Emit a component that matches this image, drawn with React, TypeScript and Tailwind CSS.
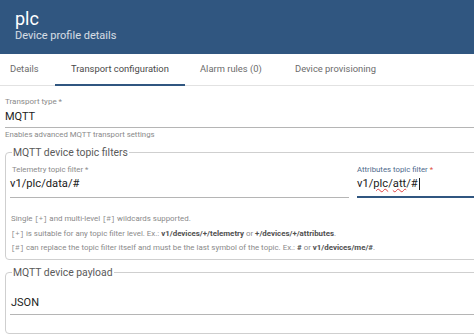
import React from 'react';

const Code: React.FC<{ children: React.ReactNode }> = ({ children }) => (
    <span className="font-['Liberation_Mono',monospace] text-[7.2px]">{children}</span>
);

const tabs = [
    { label: 'Details', box: 'w-[55px] pl-[10px]' },
    { label: 'Transport configuration', box: 'w-[130px] justify-center', active: true },
    { label: 'Alarm rules (0)', box: 'w-[95px] pl-[15px]' },
    { label: 'Device provisioning', box: 'w-[150px] pl-[15px]' },
];

export default function App() {
    return (
        <div className="w-[474px] h-[335px] overflow-hidden bg-white font-['Roboto','Noto_Sans',sans-serif]">
            <div className="h-[54px] bg-[#305680] px-[15px] pt-[9px]">
                <div className="text-[18px] leading-[20px] text-white">plc</div>
                <div className="mt-[1px] text-[11px] leading-[12px] text-white/80">Device profile details</div>
            </div>

            <div className="flex h-[32px] border-b border-[#e2e2e2]">
                {tabs.map((tab) => (
                    <div key={tab.label} className={`relative flex items-center text-[9.4px] ${tab.box} ${tab.active ? 'text-[#4a4a4a]' : 'text-[#6b6b6b]'}`}>
                        {tab.label}
                        {tab.active && <div className="absolute left-0 right-0 bottom-[-1px] h-[2px] bg-[#305680]" />}
                    </div>
                ))}
            </div>

            <div className="w-[520px] pl-[5px]">
                <div className="mt-[11px] border-b border-[#b5b5b5] pb-[3px]">
                    <div className="text-[8px] leading-[10px] text-[#8a8a8a]">Transport type *</div>
                    <div className="mt-[3px] text-[11px] leading-[14px] text-[#222]">MQTT</div>
                </div>
                <div className="mt-[2px] text-[7.8px] leading-[10px] text-[#8a8a8a]">Enables advanced MQTT transport settings</div>

                <fieldset className="mt-[6px] rounded-[4px] border border-[#cfcfcf] pl-[4px] pb-[3px]">
                    <legend className="ml-[2px] px-[1px] text-[10.4px] leading-[13px] text-[#5a5a5a]">MQTT device topic filters</legend>
                    <div className="mt-[6px] flex gap-[8px]">
                        <div className="w-[339px] border-b border-[#b5b5b5] pb-[5px]">
                            <div className="pl-[2px] text-[7.8px] leading-[10px] text-[#8a8a8a]">Telemetry topic filter *</div>
                            <div className="mt-[1px] text-[11.2px] leading-[16px] text-[#222]">v1/plc/data/#</div>
                        </div>
                        <div className="flex-1 border-b-2 border-[#305680] pb-[4px]">
                            <div className="text-[7.8px] leading-[10px] text-[#4f6a8c]">
                                Attributes topic filter <span className="text-[#e0533d]">*</span>
                            </div>
                            <div className="mt-[1px] flex items-center text-[11.2px] leading-[16px] text-[#222]">
                                v1/<span className="underline decoration-wavy decoration-[#e04040] decoration-1 underline-offset-[1px] [text-decoration-thickness:0.5px]">plc</span>/<span className="underline decoration-wavy decoration-[#e04040] underline-offset-[1px] [text-decoration-thickness:0.5px]">att</span>/#
                                <span className="ml-[1px] h-[12px] w-[1px] bg-[#222]" />
                            </div>
                        </div>
                    </div>
                    <div className="mt-[14px] pl-[1px] text-[7.9px] leading-[14.5px] text-[#8a8a8a]">
                        <div>
                            Single <Code>[+]</Code> and multi-level <Code>[#]</Code> wildcards supported.
                        </div>
                        <div>
                            <Code>[+]</Code> is suitable for any topic filter level. Ex.: <b className="text-[#505050]">v1/devices/+/telemetry</b> or <b className="text-[#505050]">+/devices/+/attributes</b>.
                        </div>
                        <div>
                            <Code>[#]</Code> can replace the topic filter itself and must be the last symbol of the topic. Ex.: <b className="text-[#505050]">#</b> or <b className="text-[#505050]">v1/devices/me/#</b>.
                        </div>
                    </div>
                </fieldset>

                <fieldset className="mt-[6px] rounded-[4px] border border-[#cfcfcf] pl-[4px] pb-[18px]">
                    <legend className="ml-[2px] px-[1px] text-[10.4px] leading-[13px] text-[#5a5a5a]">MQTT device payload</legend>
                    <div className="mt-[16px] border-b border-[#b5b5b5] pb-[3px]">
                        <div className="pl-[1px] text-[11px] leading-[16px] text-[#222]">JSON</div>
                    </div>
                </fieldset>
            </div>
        </div>
    );
}
